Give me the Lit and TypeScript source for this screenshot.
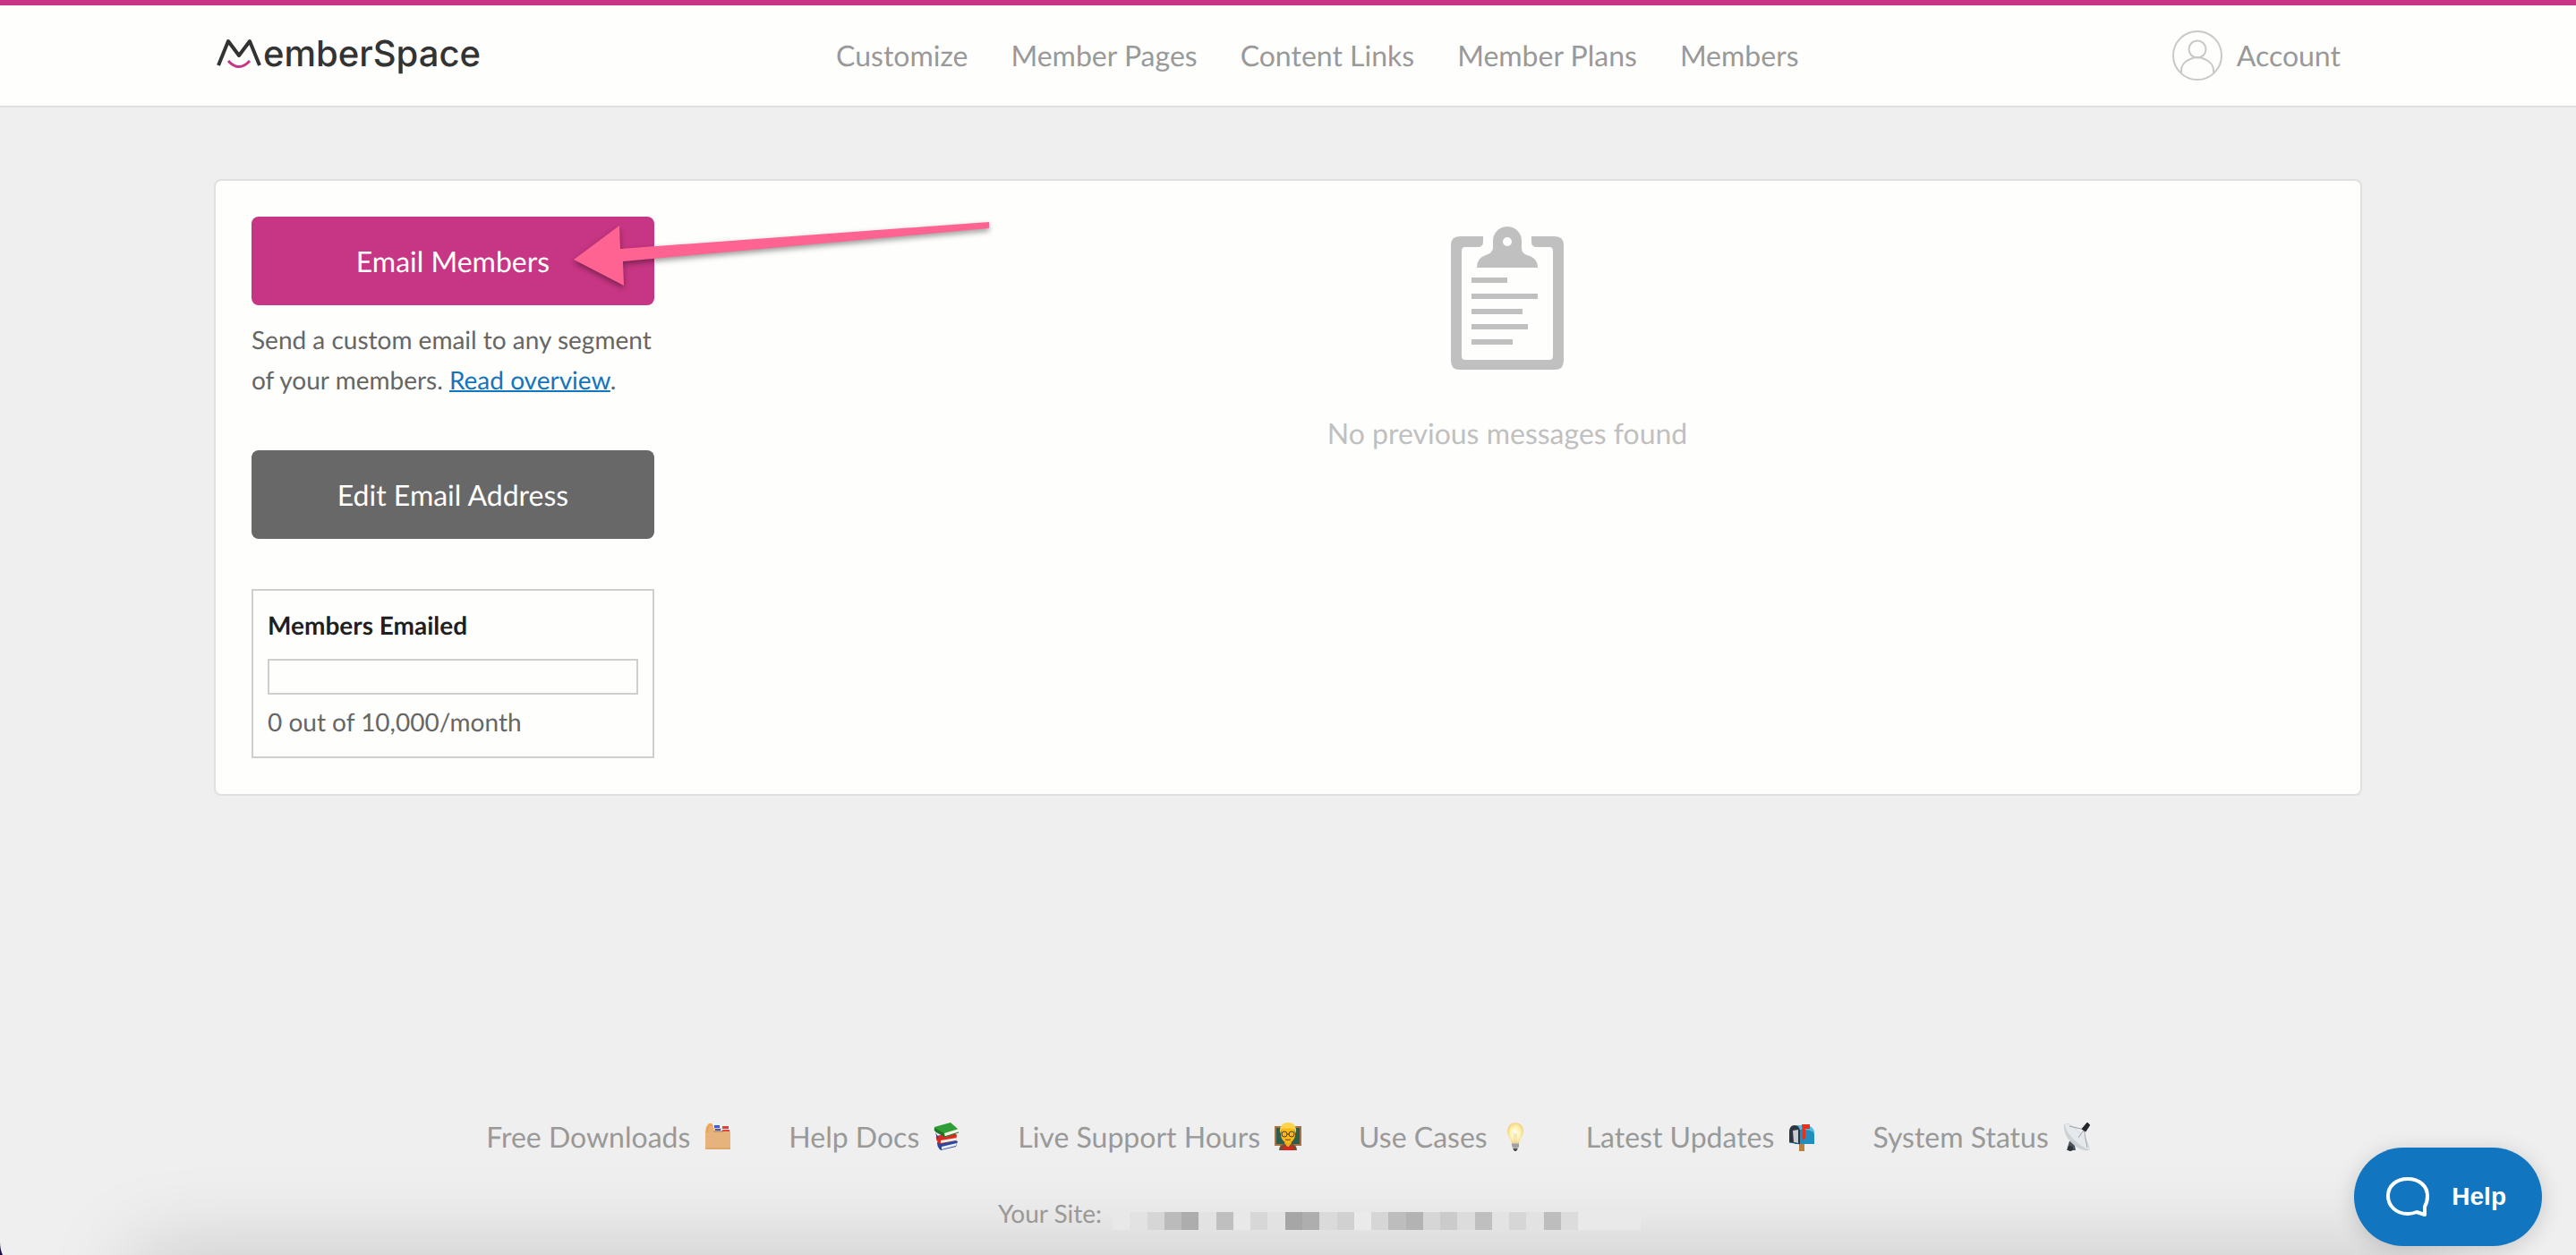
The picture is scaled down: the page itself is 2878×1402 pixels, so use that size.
import { LitElement, html, svg, css } from "lit";
import { customElement } from "lit/decorators.js";

const NAV = ["Customize", "Member Pages", "Content Links", "Member Plans", "Members"];

/* Footer icons share a 30x32 grid. */
const folder = svg`
  <path d="M2 5 5 1h3l2 3v8H1z" fill="#f0a44a"/>
  <path d="M5 4h5v8H4z" fill="#e5b07a"/>
  <rect x="11" y="3" width="6" height="3" fill="#3f5bd8"/>
  <rect x="10" y="6" width="9" height="3" fill="#e9c9a4"/>
  <rect x="12" y="7" width="6" height="3" fill="#3f5bd8"/>
  <rect x="20" y="4" width="7" height="3" fill="#e0413c"/>
  <rect x="20" y="8" width="8" height="4" fill="#d94a45"/>
  <rect x="10" y="9" width="10" height="3" fill="#cf9867"/>
  <path d="M1 11h19l1-1h8v19q0 1-1 1H2q-1 0-1-1z" fill="#e6b37c"/>
  <path d="M1 29h28" stroke="#d79c5e"/>`;

const books = svg`
  <path d="M4 22 22 19l5 2-2 6-17 4q-4-3-4-9z" fill="#2b489c"/>
  <path d="m9 27 17-4-1 3-16 4z" fill="#e9edf5"/>
  <path d="M3 15 23 11l3 3-1 6-18 4q-5-4-4-9z" fill="#d92c20"/>
  <path d="m8 20 18-3-1 3-17 3z" fill="#f3efe6"/>
  <path d="M2 11 6 17 4 18z" fill="#2b489c"/>
  <path d="M1 5 19 0l9 8-16 6q-2-1-11-6z" fill="#2f9e36"/>
  <path d="m12 12 16-5v4l-15 5z" fill="#f4f1e8"/>
  <path d="m1 6 11 6v4L3 11q-3-2-2-5z" fill="#1b7427"/>
  <path d="m12 16 16-5" stroke="#1b7427"/>`;

const teacher = svg`
  <rect x="0" y="4" width="30" height="22" fill="#a87446"/>
  <rect x="2" y="6" width="26" height="18" fill="#2f5d4c"/>
  <path d="M5 31q0-6 6-7h8q6 1 6 7z" fill="#7b4a35"/>
  <path d="m11 23 4 5 4-5-1-3h-6z" fill="#f0ae1a"/>
  <ellipse cx="15" cy="13" rx="8" ry="10" fill="#fbb917"/>
  <path d="M6 12Q5 0 15 0t9 12l-2-4q-4-3-8-1-3-2-6 1z" fill="#fbd34c"/>
  <g fill="none" stroke="#4d3a22"><circle cx="11" cy="13" r="3"/><circle cx="19" cy="13" r="3"/><path d="M14 13h2"/></g>
  <path d="M12 19q3 1 6 0" fill="none" stroke="#7a3b1c"/>
  <rect x="10" y="27" width="11" height="4" fill="#d8231f"/>`;

const bulb = svg`
  <defs><radialGradient id="glow"><stop offset="0" stop-color="#fffef2"/><stop offset=".6" stop-color="#fff3b4"/><stop offset="1" stop-color="#f4d283"/></radialGradient></defs>
  <path d="M15 0q9 1 9 10 0 4-3 8-2 3-2 6h-8q0-3-2-6-3-4-3-8 0-9 9-10z" fill="url(#glow)"/>
  <path d="M14 12v11m2-11v11" stroke="#ecd79a"/>
  <path d="M11 23h8v4l-2 2h-4l-2-2z" fill="#b9b9b7"/>
  <path d="M11 25h8m-7 2h7" stroke="#8a8a88"/>
  <path d="M12 29h6l-2 3h-2z" fill="#4e4e50"/>`;

const mailbox = svg`
  <path d="M12 22h6v10h-6z" fill="#b9803f"/>
  <path d="M7 4h14q8 1 8 9v11H7z" fill="#1f8fc2"/>
  <path d="M9 3h12q7 1 8 8-8-4-17-3z" fill="#58bce0"/>
  <path d="M1 11q0-8 6-8t6 8v13l-12-2z" fill="#2d3640"/>
  <path d="m5 9 6-1v15l-5-1z" fill="#c6cdd3"/>
  <path d="M1 22 13 24" stroke="#145f86"/>
  <path d="M15 2h9v5h-5v10q-1 3-3 2z" fill="#e8301f"/>`;

const dish = svg`
  <path d="m4 31 3-10h5l2 10z" fill="#4b545e"/>
  <circle cx="8" cy="29" r="3" fill="#2d343b"/>
  <path d="M1 2Q4-1 9 3 19 9 26 20q5 8 3 11-6 2-16-5Q0 16 1 2z" fill="#cdd2d7"/>
  <path d="M2 1q6 0 15 9 11 10 12 20-8-2-17-11Q2 9 2 1z" fill="#e6e9ec"/>
  <path d="M17 17 24 7M7 4l17 4m-1-1 4 21" stroke="#9aa2aa"/>
  <path d="m22 7 5-6 2 2-4 6z" fill="#23282d" stroke="#23282d" stroke-width="2"/>`;

const LINKS = [
  { label: "Free Downloads", icon: folder },
  { label: "Help Docs", icon: books },
  { label: "Live Support Hours", icon: teacher },
  { label: "Use Cases", icon: bulb },
  { label: "Latest Updates", icon: mailbox },
  { label: "System Status", icon: dish },
];

/* Grey levels of the redacted site address, left to right. */
const MOSAIC = [
  "e8", "e2", "d6", "bb", "ad", "e2", "bf", "e8", "d7", "e2", "a6", "ae", "da", "d1", "ea",
  "d6", "bd", "b3", "d6", "cb", "dc", "bf", "e3", "d6", "e2", "bd", "dc",
];

@customElement("app-root")
export class AppRoot extends LitElement {
  static styles = css`
    :host {
      display: block;
      font-family: Lato, "Liberation Sans", sans-serif;
      font-size: 28px;
      line-height: 45px;
      color: #666;
      text-rendering: geometricPrecision;
    }
    * { box-sizing: border-box; }
    svg { display: block; }
    p, h2 { margin: 0; }
    a { color: inherit; text-decoration: none; }
    .page {
      position: relative;
      overflow: hidden;
      min-height: 100vh;
      display: flex;
      flex-direction: column;
      background: #efefef;
    }
    .header {
      background: #fefefd;
      border-top: 6px solid #c73684;
      border-bottom: 2px solid #e0e0e0;
    }
    .wrap {
      width: 100%;
      max-width: 2400px;
      margin: 0 auto;
    }
    .bar {
      display: flex;
      align-items: center;
      justify-content: space-between;
      height: 112px;
      padding: 0 24px 0 2px;
      font-size: 32px;
      line-height: 48px;
      color: #999;
    }
    .logo {
      display: flex;
      align-items: center;
      gap: 1px;
      padding-bottom: 4px;
      color: #333;
      font-family: Inter, "Liberation Sans", sans-serif;
      font-size: 40px;
      font-weight: 500;
    }
    .nav { display: flex; gap: 48px; }
    .account { display: flex; align-items: center; gap: 16px; padding-left: 20px; }
    .card {
      display: grid;
      grid-template-columns: 450px 1fr;
      gap: 40px;
      margin-top: 80px;
      padding: 40px;
      background: #fefefd;
      border: 2px solid #e0e0e0;
      border-radius: 8px;
    }
    .side { display: flex; flex-direction: column; }
    .cta { position: relative; }
    .btn {
      display: block;
      width: 100%;
      height: 99px;
      border: 0;
      border-radius: 8px;
      color: #fff;
      font: inherit;
      font-size: 32px;
      text-rendering: inherit;
      cursor: pointer;
    }
    .pink { background: #c73684; }
    .grey { background: #686868; }
    .arrow {
      position: absolute;
      left: 356px;
      top: 5px;
      pointer-events: none;
      filter: drop-shadow(0 3px 3px rgba(0, 0, 0, 0.4));
    }
    .intro { margin: 16px 0 56px; }
    .intro a { color: #1175c0; text-decoration: underline; text-decoration-thickness: 2px; }
    .usage {
      margin-top: 56px;
      padding: 16px;
      border: 2px solid #cfcfcf;
    }
    .usage h2 { font-size: 28px; font-weight: 700; color: #1f1f1f; line-height: 45px; }
    .track { height: 40px; margin: 15px 0 8px; border: 2px solid #cfcfcf; }
    .empty {
      display: flex;
      flex-direction: column;
      align-items: center;
      gap: 46px;
      padding-top: 11px;
      font-size: 32px;
      line-height: 48px;
      color: #c0c0c0;
    }
    .footer {
      position: relative;
      display: flex;
      flex-direction: column;
      align-items: center;
      gap: 39px;
      margin-top: auto;
      padding-bottom: 24px;
      color: #999;
    }
    .links { display: flex; gap: 64px; font-size: 32px; line-height: 48px; }
    .links a { display: flex; align-items: center; gap: 16px; }
    .site { display: flex; align-items: center; gap: 12px; }
    .mosaic { display: flex; width: 590px; height: 20px; margin: 16px -70px 0 0; }
    .tile { flex: 1; }
    .rest { width: 70px; background: #e9e9e9; }
    .dock {
      position: absolute;
      left: 150px;
      right: 150px;
      bottom: -100px;
      height: 100px;
      box-shadow: 0 0 100px rgba(0, 0, 0, 0.18);
    }
    .corner { position: absolute; left: 0; bottom: 0; }
    .help {
      position: absolute;
      right: 38px;
      bottom: 10px;
      display: flex;
      align-items: center;
      gap: 24px;
      height: 110px;
      padding: 0 40px 0 35px;
      border: 0;
      border-radius: 55px;
      background: #1175c0;
      color: #fff;
      font: bold 28px "Liberation Sans", Arial, sans-serif;
      box-shadow: 0 4px 24px rgba(0, 0, 0, 0.16);
      cursor: pointer;
    }
  `;

  render() {
    return html`
      <div class="page">
        <header class="header">
          <div class="wrap bar">
            <a class="logo" href="#" aria-label="MemberSpace">
              <svg width="52" height="36" viewBox="0 0 52 36" fill="none" stroke-linejoin="round">
                <path d="M3 31 14 4 26 20 38 4 49 31" stroke="#333" stroke-width="4"/>
                <path d="M14 26q12 13 24 0" stroke="#c73684" stroke-width="3"/>
              </svg>
              <span>emberSpace</span>
            </a>
            <nav class="nav">${NAV.map((n) => html`<a href="#">${n}</a>`)}</nav>
            <a class="account" href="#">
              <svg width="56" height="56" viewBox="0 0 56 56" fill="none" stroke="#c8c8c8" stroke-width="2">
                <circle cx="28" cy="28" r="27"/>
                <circle cx="28" cy="21" r="9.500"/>
                <path d="M10 47V45a18 14 0 0 1 10-13q8-4 16 0a18 14 0 0 1 10 13v2"/>
              </svg>
              Account
            </a>
          </div>
        </header>

        <main class="wrap card">
          <div class="side">
            <div class="cta">
              <button class="btn pink">Email Members</button>
              <svg class="arrow" width="474" height="80" viewBox="0 0 474 80">
                <path d="M4 43 55 5 56 31 468 1V8L59 45 60 72z" fill="#ff6392"/>
              </svg>
            </div>
            <p class="intro">Send a custom email to any segment of your members. <a href="#">Read overview</a>.</p>
            <button class="btn grey">Edit Email Address</button>
            <section class="usage">
              <h2>Members Emailed</h2>
              <div class="track" role="progressbar" aria-label="Members Emailed" aria-valuenow="0" aria-valuemax="10000"></div>
              <p>0 out of 10,000/month</p>
            </section>
          </div>
          <section class="empty">
            <svg width="126" height="161" viewBox="0 0 126 161" fill="#c0c0c0">
              <path d="M10 11h26v6q0 6-6 6H16q-4 0-4 4v118q0 4 4 4h94q4 0 4-4V27q0-4-4-4H96q-6 0-6-6v-6h26q10 0 10 10v129q0 10-10 10H10q-10 0-10-10V21Q0 11 10 11z"/>
              <path fill-rule="evenodd" d="M63 0a16 16 0 0 1 16 16v8q0 6 6 8 12 3 12 14H29q0-11 10-14 8-3 8-8v-8A16 16 0 0 1 63 0zm0 12a5 5 0 1 0 0 10 5 5 0 0 0 0-10z"/>
              <path d="M23 57h40v6H23zm0 18h74v6H23zm0 17h57v6H23zm0 17h63v6H23zm0 17h46v6H23z"/>
            </svg>
            <p>No previous messages found</p>
          </section>
        </main>

        <div class="dock"></div>
        <footer class="footer">
          <nav class="links">
            ${LINKS.map((l) => html`<a href="#">${l.label}<svg width="30" height="32" viewBox="0 0 30 32">${l.icon}</svg></a>`)}
          </nav>
          <div class="site">
            <span>Your Site:</span>
            <div class="mosaic">
              ${MOSAIC.map((g) => html`<span class="tile" style="background:#${g}${g}${g}"></span>`)}
              <span class="rest"></span>
            </div>
          </div>
        </footer>

        <svg class="corner" width="3" height="15" viewBox="0 0 3 15"><path d="M0 0Q0 9 3 15H0z" fill="#1c0b45"/></svg>
        <button class="help">
          <svg width="50" height="46" viewBox="0 0 50 46" fill="none" stroke="#fff" stroke-width="4" stroke-linejoin="round">
            <path d="M25 3C12 3 3 11 3 22s9 20 22 20q5 0 10-2l9 3V34q3-5 3-12C47 11 38 3 25 3z"/>
          </svg>
          Help
        </button>
      </div>
    `;
  }
}
